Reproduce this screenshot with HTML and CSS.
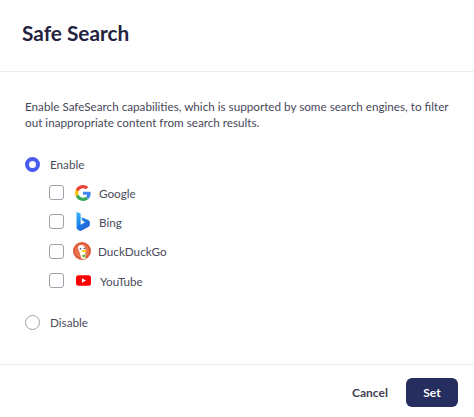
FILE: index.html
```html
<!DOCTYPE html>
<html lang="en">
<head>
<meta charset="utf-8">
<title>Safe Search</title>
<link rel="stylesheet" href="styles.css">
</head>
<body>
<div class="dialog">
  <header class="head"><h1 class="title">Safe Search</h1></header>
  <main class="content">
    <p class="desc">Enable SafeSearch capabilities, which is supported by some search engines, to filter out inappropriate content from search results.</p>
    <div class="option option-enable"><span class="radio radio-on"></span><span>Enable</span></div>
    <ul class="engines">
      <li class="engine"><span class="check"></span>
        <svg class="logo" viewBox="0 0 48 48"><path fill="#EA4335" d="M24 9.500c3.500 0 6.700 1.300 9.100 3.500l6.800-6.800C35.900 2.400 30.300 0 24 0 14.600 0 6.500 5.400 2.600 13.200l7.900 6.200C12.400 13.700 17.700 9.500 24 9.500z"/><path fill="#4285F4" d="M46.900 24.500c0-1.600-.2-3.100-.4-4.500H24v9h12.900c-.6 3-2.200 5.500-4.700 7.200l7.700 6C44.400 37.900 46.900 31.800 46.900 24.500z"/><path fill="#FBBC05" d="M10.500 28.600c-.5-1.400-.8-3-.8-4.600s.3-3.200.8-4.600l-7.900-6.200C.9 16.500 0 20.100 0 24s.9 7.500 2.600 10.800l7.900-6.200z"/><path fill="#34A853" d="M24 48c6.500 0 11.900-2.100 15.900-5.800l-7.700-6c-2.200 1.500-4.900 2.300-8.200 2.300-6.300 0-11.600-4.200-13.500-9.900l-7.900 6.200C6.500 42.600 14.600 48 24 48z"/></svg>
        <span class="name">Google</span></li>
      <li class="engine"><span class="check"></span>
        <svg class="logo logo-bing" viewBox="0 0 32 44"><defs><linearGradient id="bing" x1="0" y1="0" x2="0.7" y2="1"><stop offset="0" stop-color="#37bdff"/><stop offset="0.55" stop-color="#1b7ce8"/><stop offset="1" stop-color="#2a5ed6"/></linearGradient></defs><path fill="url(#bing)" d="M1 1c0-1 1-1 2-.5l6 2.500c1 .5 1.500 1 1.500 2.500v24l10-6-4.500-2.500c-1-.5-1.500-1.500-2-2.500l-1.500-4c-.5-1.500.5-2 1.500-1.500l14 5.500c2 1 4 3 4 6v4c0 3-1.500 5-4 6.500L13 43c-2 1.300-4 1.300-6 0l-3-2c-2-1.300-3-3-3-5z"/></svg>
        <span class="name">Bing</span></li>
      <li class="engine"><span class="check"></span>
        <svg class="logo logo-duck" viewBox="0 0 48 48"><circle cx="24" cy="24" r="24" fill="#de5833"/><circle cx="24" cy="24" r="19" fill="#e8734f"/><path fill="#fff" d="M15 10c6-4 14-2 16 3 3 6 2 9 2 13 0 7 0 12 1 18-6 2-10 1-12 0-1-8-3-13-5-18-3-6-5-12-2-16z"/><path fill="#fdd20a" d="M22 23c3-2 8-2 12-1 3 1 3 3 0 4-2 1-4 1-6 1-3 0-7-2-6-4z"/><path fill="#65bc46" d="M24 36c2-2 6-3 9-2l1 5c-3 2-6 2-9 1z"/><circle cx="20" cy="18" r="2.300" fill="#2d4f8e"/><circle cx="30" cy="17" r="2" fill="#2d4f8e"/></svg>
        <span class="name">DuckDuckGo</span></li>
      <li class="engine"><span class="check"></span>
        <svg class="logo logo-yt" viewBox="0 0 48 34"><rect x="0" y="0" width="48" height="34" rx="8" fill="#f00"/><path fill="#fff" d="M19 10l13 7-13 7z"/></svg>
        <span class="name name-yt">YouTube</span></li>
    </ul>
    <div class="option option-disable"><span class="radio"></span><span>Disable</span></div>
  </main>
  <footer class="foot">
    <button class="btn btn-text" type="button">Cancel</button>
    <button class="btn btn-primary" type="button">Set</button>
  </footer>
</div>
</body>
</html>
```

FILE: styles.css
```css
* { box-sizing: border-box; }
html, body { margin: 0; padding: 0; background: #fff; }
body { font-family: "Lato", "Liberation Sans", sans-serif; color: #4a4a5c; width: 474px; height: 417px; overflow: hidden; }
.dialog { display: flex; flex-direction: column; height: 417px; }
.head { height: 72px; padding: 20px 22px 0; border-bottom: 1px solid #ececef; }
.title { margin: 0; font-size: 20.800px; line-height: 26px; font-weight: 700; color: #23233f; }
.content { flex: 1; padding: 26px 25px 0; }
.desc { margin: 0; font-size: 11.700px; line-height: 16px; color: #474759; }
.option { display: flex; align-items: center; gap: 10px; font-size: 11.700px; line-height: 16px; height: 16px; }
.option-enable { margin-top: 26px; }
.option-disable { margin-top: 19px; }
.radio { width: 15px; height: 15px; border-radius: 50%; border: 1.500px solid #a0a0aa; background: #fff; flex: none; }
.radio-on { border: 4.500px solid #4a5cf0; }
.engines { list-style: none; margin: 6px 0 0; padding: 0 0 0 24px; }
.engine { display: flex; align-items: center; height: 29.300px; font-size: 11.700px; }
.check { width: 15px; height: 15px; border: 1.500px solid #a0a0aa; border-radius: 3px; background: #fff; flex: none; }
.logo { width: 16px; height: 16px; margin-left: 11px; flex: none; }
.logo-bing { width: 14px; height: 19px; margin-left: 12px; margin-right: 1px; }
.logo-duck { width: 18px; height: 18px; margin-left: 9px; margin-right: -1px; }
.logo-yt { width: 15px; height: 11px; margin-left: 12px; }
.name { margin-left: 8px; }
.name-yt { margin-left: 9px; }
.foot { height: 53px; border-top: 1px solid #ececef; display: flex; align-items: flex-start; justify-content: flex-end; gap: 12px; padding: 13px 16px 0 0; }
.btn { font-family: inherit; font-size: 12px; font-weight: 700; height: 29px; border: 0; border-radius: 6px; padding: 0; }
.btn-text { width: 48px; background: transparent; color: #3f3f55; }
.btn-primary { width: 52px; background: #252e5e; color: #fff; }
```
